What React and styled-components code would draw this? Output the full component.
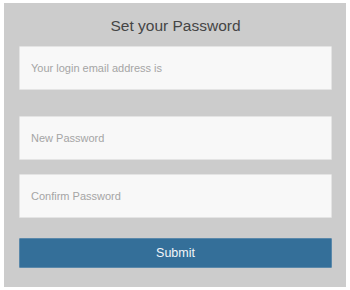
import React from "react";
import styled, { createGlobalStyle } from "styled-components";

const Global = createGlobalStyle`
  html, body { margin: 0; padding: 0; background: #ffffff; }
  body { font-family: "Liberation Sans", Arial, sans-serif; }
  * { box-sizing: border-box; }
`;

const Panel = styled.form`
  margin: 3px 0 0 4px;
  width: 342px;
  height: 284px;
  background: #cccccc;
  padding: 0 14px 0 15px;
  display: flex;
  flex-direction: column;
`;

const Title = styled.h1`
  margin: 0;
  height: 43px;
  padding-top: 14px;
  font-size: 15.5px;
  font-weight: normal;
  line-height: 17px;
  text-align: center;
  color: #454545;
`;

const Field = styled.input`
  display: block;
  width: 100%;
  height: 44px;
  margin: ${(p) => p.$top}px 0 0 0;
  padding: 0 11px;
  border: 1px solid #e4e4e4;
  border-radius: 1px;
  background: #f8f8f8;
  font-family: "Liberation Sans", Arial, sans-serif;
  font-size: 11px;
  color: #555;
  outline: none;
  &::placeholder { color: #a5a5a5; }
`;

const Button = styled.button`
  display: block;
  width: 100%;
  height: 30px;
  margin-top: 20px;
  border: 1px solid #5a88aa;
  border-radius: 1px;
  background: #346f99;
  color: #f2f6f9;
  font-family: "Liberation Sans", Arial, sans-serif;
  font-size: 12.5px;
  cursor: pointer;
`;

export default function App() {
  return (
    <>
      <Global />
      <Panel onSubmit={(e) => e.preventDefault()}>
        <Title>Set your Password</Title>
        <Field $top={0} type="email" placeholder="Your login email address is" />
        <Field $top={26} type="password" placeholder="New Password" />
        <Field $top={14} type="password" placeholder="Confirm Password" />
        <Button type="submit">Submit</Button>
      </Panel>
    </>
  );
}
